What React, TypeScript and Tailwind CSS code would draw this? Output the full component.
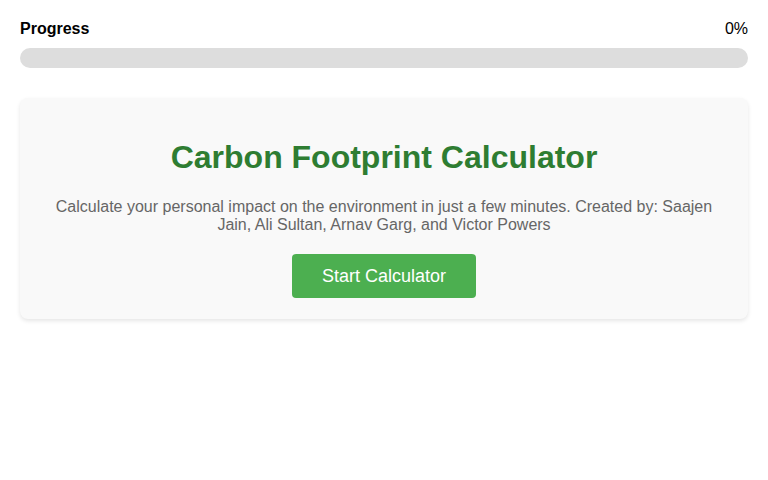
export default function App() {
  return (
    <div className="min-h-screen bg-white p-5 font-['Liberation_Sans',Arial,sans-serif] text-base text-[#333]">
      {/* Progress */}
      <div className="flex items-center justify-between leading-[18px]">
        <span className="font-bold text-black">Progress</span>
        <span className="text-black">0%</span>
      </div>
      <div className="mt-2.5 h-5 w-full rounded-full bg-[#ddd]">
        <div className="h-full w-0 rounded-full bg-[#4caf50]" />
      </div>

      {/* Intro card */}
      <div className="mt-[30px] rounded-lg bg-[#f9f9f9] px-5 pt-[41px] pb-[21px] text-center shadow-[0_2px_4px_rgba(0,0,0,0.1)]">
        <h1 className="text-[32px] font-bold leading-[37px] text-[#2e7d32]">Carbon Footprint Calculator</h1>
        <p className="mt-[22px] leading-[18px] text-[#666]">
          Calculate your personal impact on the environment in just a few minutes. Created by: Saajen Jain, Ali Sultan, Arnav Garg, and Victor Powers
        </p>
        <button className="mt-5 h-[44px] rounded bg-[#4caf50] px-[30px] text-lg text-white">
          Start Calculator
        </button>
      </div>
    </div>
  );
}
